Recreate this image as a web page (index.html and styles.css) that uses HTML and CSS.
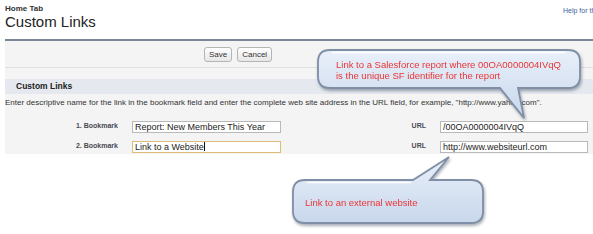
FILE: index.html
```html
<!DOCTYPE html>
<html>
<head>
  <link rel="stylesheet" href="styles.css">
</head>
<body>
  <div class="page-header">
    <div class="title-block">
      <div class="crumb">Home Tab</div>
      <h1>Custom Links</h1>
    </div>
    <a class="help" href="#">Help for this Page</a>
  </div>

  <div class="panel">
    <div class="btn-row">
      <button class="btn">Save</button>
      <button class="btn">Cancel</button>
    </div>
    <div class="section-head">Custom Links</div>
    <div class="desc">Enter descriptive name for the link in the bookmark field and enter the complete web site address in the URL field, for example, "http://www.yahoo.com".</div>
    <div class="fields">
      <label class="lbl">1. Bookmark</label>
      <input class="field" type="text" value="Report: New Members This Year">
      <label class="lbl">URL</label>
      <input class="field" type="text" value="/00OA0000004IVqQ">

      <label class="lbl">2. Bookmark</label>
      <div class="field focused">Link to a Website<span class="caret"></span></div>
      <label class="lbl">URL</label>
      <input class="field" type="text" value="http://www.websiteurl.com">
    </div>
  </div>

  <!-- callouts drawn over the form -->
  <div class="callout callout-report">
    <svg width="280" height="80" viewBox="0 0 280 80">
      <defs>
        <linearGradient id="bub1" x1="0" y1="0" x2="0" y2="1">
          <stop offset="0" stop-color="#e9f0fa"/>
          <stop offset="1" stop-color="#c8d7ec"/>
        </linearGradient>
      </defs>
      <path d="M18 6 H256 Q268 6 268 18 V32 Q268 44 256 44 H206 L212 74 L188 44 H18 Q6 44 6 32 V18 Q6 6 18 6 Z"
            fill="url(#bub1)" stroke="#7f8fa5" stroke-width="1.8"/>
      <path d="M20 8.5 H254" stroke="#ffffff" stroke-width="1.5" fill="none"/>
    </svg>
    <div class="callout-text">Link to a Salesforce report where 00OA0000004IVqQ<br>is the unique SF identifier for the report</div>
  </div>

  <div class="callout callout-external">
    <svg width="210" height="82" viewBox="0 0 210 82">
      <defs>
        <linearGradient id="bub2" x1="0" y1="0" x2="0" y2="1">
          <stop offset="0" stop-color="#e9f0fa"/>
          <stop offset="1" stop-color="#c8d7ec"/>
        </linearGradient>
      </defs>
      <path d="M18 30 H126 L162 7 L143 30 H184 Q196 30 196 42 V61 Q196 73 184 73 H18 Q6 73 6 61 V42 Q6 30 18 30 Z"
            fill="url(#bub2)" stroke="#7f8fa5" stroke-width="1.8"/>
      <path d="M20 32.5 H124" stroke="#ffffff" stroke-width="1.5" fill="none"/>
    </svg>
    <div class="callout-text">Link to an external website</div>
  </div>
</body>
</html>
```
FILE: styles.css
```css
html, body {
  height: 100%;
}

body {
  margin: 0;
  font-family: Arial, "Liberation Sans", sans-serif;
  background: #fff;
  overflow: hidden;
  position: relative;
}

.page-header {
  display: flex;
  height: 39px;
  padding-left: 5px;
  box-sizing: border-box;
}

.title-block {
  width: 558px;
  flex-shrink: 0;
}

.crumb {
  margin-top: 4px;
  font-size: 8px;
  font-weight: bold;
  line-height: 10px;
  color: #333;
}

h1 {
  margin: 0;
  font-size: 15px;
  font-weight: normal;
  line-height: 16px;
  color: #222;
}

.help {
  margin-top: 6px;
  font-size: 7px;
  line-height: 10px;
  color: #3a5f9e;
  text-decoration: none;
  white-space: nowrap;
}

.panel {
  margin-left: 5px;
  border-top: 2px solid #7b8799;
  background: #f4f4f4;
  height: 113px;
}

.btn-row {
  height: 27px;
  padding-left: 199px;
  box-sizing: border-box;
  display: flex;
  align-items: center;
  gap: 5px;
  border-bottom: 1px solid #e0e0e0;
  margin-bottom: 11px;
}

.btn {
  height: 15px;
  padding: 0 4px;
  font-family: Arial, "Liberation Sans", sans-serif;
  font-size: 8px;
  color: #333;
  background: linear-gradient(#ffffff, #e6e6e6);
  border: 1px solid #b5b5b5;
  border-radius: 3px;
}

.section-head {
  height: 15px;
  line-height: 15px;
  padding-left: 11px;
  background: #e5e9ef;
  font-size: 8.5px;
  font-weight: bold;
  color: #222;
}

.desc {
  height: 18px;
  line-height: 18px;
  font-size: 8px;
  color: #333;
  white-space: nowrap;
}

.fields {
  display: grid;
  grid-template-columns: 127px 149px 159px 148px;
  grid-auto-rows: 12px;
  row-gap: 8px;
  margin-top: 9px;
}

.lbl {
  text-align: right;
  padding-right: 14px;
  font-size: 7px;
  font-weight: bold;
  line-height: 10px;
  color: #4a4a55;
}

.field {
  box-sizing: border-box;
  height: 12px;
  margin: 0;
  padding: 0 2px;
  border: 1px solid #b9b9b9;
  background: #fff;
  font-family: Arial, "Liberation Sans", sans-serif;
  font-size: 9px;
  line-height: 10px;
  color: #222;
  outline: none;
}

.field.focused {
  border-color: #dfbb7a;
}

.caret {
  display: inline-block;
  width: 1px;
  height: 9px;
  background: #111;
  vertical-align: -1px;
}

.callout {
  position: absolute;
  filter: drop-shadow(1px 2px 1.5px rgba(60, 70, 90, 0.45));
}

.callout svg {
  display: block;
}

.callout-text {
  position: absolute;
  font-size: 9.5px;
  line-height: 11px;
  color: #ea3535;
  white-space: nowrap;
}

.callout-report {
  left: 312px;
  top: 44px;
}

.callout-report .callout-text {
  left: 24px;
  top: 15px;
}

.callout-external {
  left: 287px;
  top: 150px;
}

.callout-external .callout-text {
  left: 18px;
  top: 47px;
}
```
